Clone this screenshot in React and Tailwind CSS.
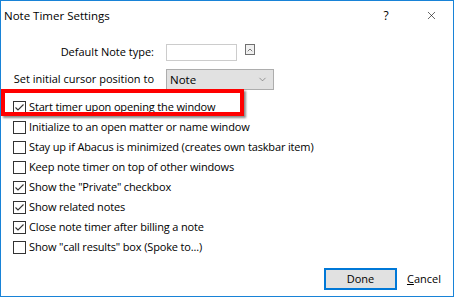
import { X, ChevronDown, ChevronUp } from 'lucide-react';

const options = [
  { label: 'Start timer upon opening the window', checked: true },
  { label: 'Initialize to an open matter or name window', checked: false },
  { label: 'Stay up if Abacus is minimized (creates own taskbar item)', checked: false },
  { label: 'Keep note timer on top of other windows', checked: false },
  { label: 'Show the "Private" checkbox', checked: true },
  { label: 'Show related notes', checked: true },
  { label: 'Close note timer after billing a note', checked: true },
  { label: 'Show "call results" box (Spoke to...)', checked: false },
];

function Checkbox({ checked }) {
  return (
    <div className="w-[13px] h-[13px] border border-[#333333] bg-white flex-shrink-0 flex items-center justify-center">
      {checked && (
        <svg width="11" height="11" viewBox="0 0 11 11">
          <polyline points="1.5,5.5 4,8 9.5,2.5" fill="none" stroke="#333333" strokeWidth="1.1" />
        </svg>
      )}
    </div>
  );
}

export default function App() {
  return (
    <div
      className="w-[454px] h-[297px] border border-[#1883d7] bg-white flex flex-col relative text-[11px] text-black"
      style={{ fontFamily: '"Open Sans", "Noto Sans", sans-serif' }}
    >
      {/* Title bar */}
      <div className="h-[29px] flex items-center pl-[3px] flex-shrink-0">
        <span className="text-[11.5px] flex-1">Note Timer Settings</span>
        <span className="w-[20px] text-center text-[12px] mr-[29px]">?</span>
        <X size={13} strokeWidth={1.1} className="mr-[15px]" />
      </div>

      {/* Fields */}
      <div className="grid grid-cols-[153px_auto] gap-x-[12px] gap-y-[8px] pt-[14px] items-center">
        <span className="text-right">Default Note type:</span>
        <div className="flex items-start gap-[8px] h-[17px]">
          <div className="w-[71px] h-[17px] border border-[#cccccc] bg-white" />
          <div className="w-[10px] h-[11px] border border-[#707070] bg-[#f0f0f0] flex items-center justify-center">
            <ChevronUp size={8} strokeWidth={1.5} />
          </div>
        </div>
        <span className="text-right">Set initial cursor position to</span>
        <div className="w-[108px] h-[21px] border border-[#adadad] bg-[#e1e1e1] flex items-center pl-[3px] pr-[5px]">
          <span className="flex-1 text-[11.5px]">Note</span>
          <ChevronDown size={11} strokeWidth={1.2} className="text-[#555555]" />
        </div>
      </div>

      {/* Checkboxes */}
      <div className="flex flex-col mt-[7px] pl-[12px] tracking-[-0.15px]">
        {options.map(o => (
          <div key={o.label} className="h-[20px] flex items-center gap-[3px]">
            <Checkbox checked={o.checked} />
            <span>{o.label}</span>
          </div>
        ))}
      </div>

      {/* Buttons */}
      <div className="mt-auto flex justify-end items-center pr-[12px] pb-[6px] gap-[10px]">
        <button className="w-[73px] h-[22px] border-2 border-[#0078d7] bg-[#e1e1e1] text-[11px]">Done</button>
        <span className="text-[11px]"><span className="underline">C</span>ancel</span>
      </div>

      {/* Annotation highlight */}
      <div className="absolute left-0 top-[88px] w-[243px] h-[27px] border-[4px] border-[#ff0000] shadow-[2px_2px_2px_rgba(0,0,0,0.45)]" />
    </div>
  );
}
